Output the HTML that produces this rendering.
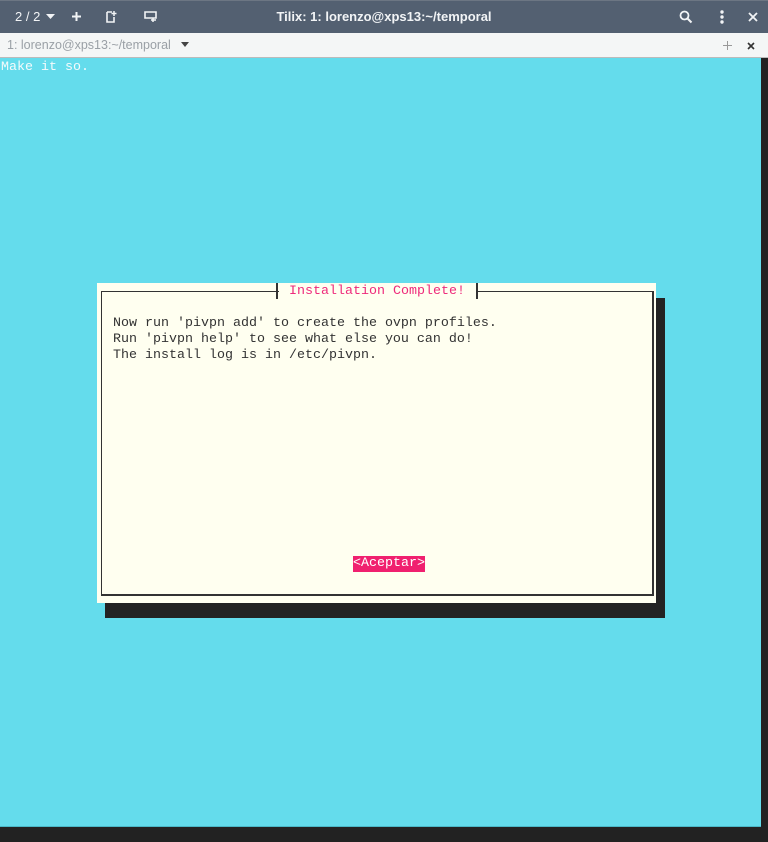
<!DOCTYPE html>
<html><head><meta charset="utf-8"><style>
*{margin:0;padding:0;box-sizing:border-box}
body{width:768px;height:842px;background:#222;position:relative;overflow:hidden;font-family:"Liberation Sans",sans-serif}
.hdr{position:absolute;left:0;top:0;width:768px;height:33px;background:#536071;color:#f2f4f6;border-top:1px solid #6c7683}
.hdr .t{position:absolute;left:0;width:768px;text-align:center;top:8px;font-size:13px;font-weight:bold}
.tab{position:absolute;left:0;top:33px;width:768px;height:25px;background:#f4f6f6;border-bottom:1px solid #bbb}
.term{position:absolute;left:0;top:58px;width:761px;height:769px;background:#64dcec;border-bottom:1px solid #4ab8c8}
.mono{font-family:"Liberation Mono",monospace;font-size:13.33px;line-height:16px;white-space:pre}
.shadow{position:absolute;left:105px;top:298px;width:560px;height:320px;background:#232323}
.dlg{position:absolute;left:97px;top:283px;width:559px;height:320px;background:#fffff0}
.inner{position:absolute;left:101px;top:291px;width:553px;height:305px;border:1px solid #333;border-right:2px solid #333;border-bottom:2px solid #333}
.tick{position:absolute;top:283px;width:2px;height:16px;background:#333}
</style></head><body>
<div class="hdr">
<span style="position:absolute;left:15px;top:8px;font-size:13px">2 / 2</span>
<svg style="position:absolute;left:46px;top:13px" width="10" height="6"><path d="M0 0h9L4.5 5z" fill="#f2f4f6"/></svg>
<svg style="position:absolute;left:71px;top:10px" width="11" height="11"><path d="M5.5 1v9M1 5.5h9" stroke="#f2f4f6" stroke-width="2"/></svg>
<svg style="position:absolute;left:105px;top:9px" width="12" height="14"><path d="M2 2h5M2 2v10h7V7" stroke="#f2f4f6" stroke-width="1.6" fill="none"/><path d="M9 1v5M6.5 3.5h5" stroke="#f2f4f6" stroke-width="1.5"/></svg>
<svg style="position:absolute;left:144px;top:10px" width="14" height="12"><path d="M1 1h11v6H1z" stroke="#f2f4f6" stroke-width="1.6" fill="none"/><path d="M9 7v4M7 9h5" stroke="#f2f4f6" stroke-width="1.5"/></svg>
<div class="t">Tilix: 1: lorenzo@xps13:~/temporal</div>
<svg style="position:absolute;left:679px;top:9px" width="14" height="14"><circle cx="5.5" cy="5.5" r="4" stroke="#f2f4f6" stroke-width="1.8" fill="none"/><path d="M8.5 8.5l4 4" stroke="#f2f4f6" stroke-width="2"/></svg>
<svg style="position:absolute;left:719px;top:8px" width="6" height="16"><circle cx="3" cy="3" r="1.7" fill="#f2f4f6"/><circle cx="3" cy="8" r="1.7" fill="#f2f4f6"/><circle cx="3" cy="13" r="1.7" fill="#f2f4f6"/></svg>
<svg style="position:absolute;left:748px;top:11px" width="10" height="10"><path d="M1 1l8 8M9 1l-8 8" stroke="#f2f4f6" stroke-width="1.8"/></svg>
</div>
<div class="tab">
<span style="position:absolute;left:7px;top:5px;font-size:12.5px;color:#9aa0a6">1: lorenzo@xps13:~/temporal</span>
<svg style="position:absolute;left:181px;top:9px" width="9" height="6"><path d="M0 0h8L4 5z" fill="#444"/></svg>
<svg style="position:absolute;left:723px;top:8px" width="9" height="9"><path d="M4.5 0v9M0 4.5h9" stroke="#999" stroke-width="1"/></svg>
<svg style="position:absolute;left:747px;top:9px" width="8" height="8"><path d="M1 1l6 6M7 1l-6 6" stroke="#333" stroke-width="1.6"/></svg>
</div>
<div class="term">
<div class="mono" style="position:absolute;left:1px;top:2px;color:#f4fbfc">Make it so.</div>
</div>
<div class="shadow"></div>
<div class="dlg"></div>
<div class="inner"></div>
<div style="position:absolute;left:279px;top:284px;width:197px;height:16px;background:#fffff0"></div>
<div class="tick" style="left:276px"></div>
<div class="tick" style="left:476px"></div>
<div class="mono" style="position:absolute;left:289px;top:284px;color:#ee2a7b">Installation Complete!</div>
<div class="mono" style="position:absolute;left:113px;top:316px;color:#333">Now run 'pivpn add' to create the ovpn profiles.
Run 'pivpn help' to see what else you can do!
The install log is in /etc/pivpn.</div>
<div class="mono" style="position:absolute;left:353px;top:556px;background:#f0206f;color:#fff;height:16px">&lt;Aceptar&gt;</div>
</body></html>
